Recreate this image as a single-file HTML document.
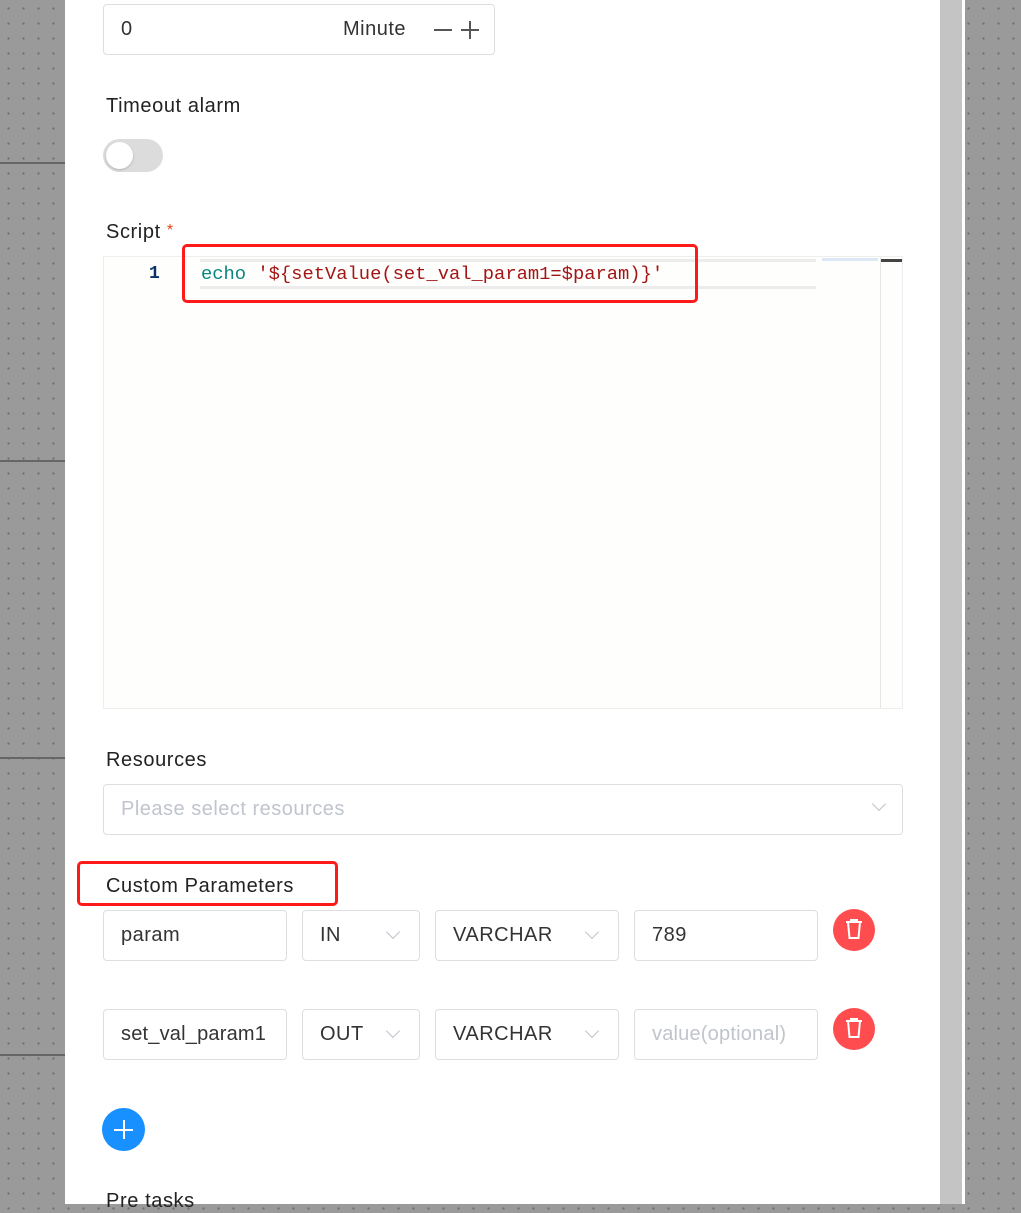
<!DOCTYPE html>
<html><head><meta charset="utf-8"><style>
*{box-sizing:border-box;margin:0;padding:0}
body{width:1021px;height:1204px;overflow:hidden;position:relative;font-family:"Liberation Sans",sans-serif;color:#333;
background-color:#9a9a9a;background-image:radial-gradient(circle at 8.5px 8.5px,#6e6e6e 1px,transparent 1.3px);background-size:15px 15px;}
.a{position:absolute}
.hl{position:absolute;left:0;width:65px;height:2px;background:#666}
.panel{position:absolute;left:65px;top:0;width:875px;height:1204px;background:#fff}
.strip{position:absolute;left:940px;top:0;width:22px;height:1204px;background:#c4c4c4}
.strip2{position:absolute;left:962px;top:0;width:3px;height:1204px;background:#fff}
.lbl{position:absolute;left:106px;font-size:20px;color:#222;line-height:24px;letter-spacing:0.6px}
.box{position:absolute;border:1px solid #dcdee2;border-radius:4px;background:#fff;font-size:20px;line-height:48px;padding-left:17px;color:#333;letter-spacing:0.5px}
.ph{color:#c0c4cc}
.chev{position:absolute;top:17px;width:10px;height:10px;border-right:1.5px solid #c0c4cc;border-bottom:1.5px solid #c0c4cc;transform:rotate(45deg)}
.del{position:absolute;width:42px;height:42px;border-radius:50%;background:#ff4d4f}
.red{position:absolute;border:3px solid #ff1a1a;border-radius:5px}
.code{position:absolute;left:97px;top:4px;font-family:"Liberation Mono",monospace;font-size:18.8px;line-height:26px;white-space:pre;color:#a31515}
</style></head><body>
<div class="hl" style="top:162px"></div>
<div class="hl" style="top:460px"></div>
<div class="hl" style="top:757px"></div>
<div class="hl" style="top:1054px"></div>
<div class="panel"></div>
<div class="strip"></div><div class="strip2"></div>

<div class="box" style="left:103px;top:4px;width:392px;height:51px">0
 <span class="a" style="left:239px;top:0">Minute</span>
 <span class="a" style="left:330px;top:24px;width:18px;height:1.5px;background:#555"></span>
 <span class="a" style="left:357px;top:24px;width:18px;height:1.5px;background:#555"></span>
 <span class="a" style="left:365px;top:16px;width:1.5px;height:18px;background:#555"></span>
</div>

<div class="lbl" style="top:94px">Timeout alarm</div>
<div class="a" style="left:103px;top:139px;width:60px;height:33px;border-radius:17px;background:#dcdcdc"></div>
<div class="a" style="left:106px;top:142px;width:27px;height:27px;border-radius:50%;background:#fff;box-shadow:0 1px 2px rgba(0,0,0,.2)"></div>

<div class="lbl" style="top:220px">Script <span style="color:#ed4014;font-size:16px;position:relative;top:-3px">*</span></div>
<div class="a" style="left:103px;top:256px;width:800px;height:453px;background:#fefefc;border:1px solid #eee">
 <div class="a" style="left:776px;top:0;width:1px;height:451px;background:#e6e6e6"></div>
 <div class="a" style="left:777px;top:2px;width:21px;height:3px;background:#444"></div>
 <div class="a" style="left:718px;top:1px;width:56px;height:3px;background:#dce8f5"></div>
 <div class="a" style="left:96px;top:2px;width:616px;height:30px;border-top:3px solid #ececec;border-bottom:3px solid #ececec"></div>
 <div class="a" style="left:45px;top:4px;font-family:'Liberation Mono',monospace;font-weight:bold;font-size:18px;color:#0a3069;line-height:26px">1</div>
 <div class="code"><span style="color:#098682">echo</span> '${setValue(set_val_param1=$param)}'</div>
</div>
<div class="red" style="left:182px;top:244px;width:516px;height:59px"></div>

<div class="lbl" style="top:748px">Resources</div>
<div class="box ph" style="left:103px;top:784px;width:800px;height:51px">Please select resources<span class="chev" style="left:770px;top:14px"></span></div>

<div class="red" style="left:77px;top:861px;width:261px;height:45px"></div>
<div class="lbl" style="top:874px">Custom Parameters</div>

<div class="box" style="left:103px;top:910px;width:184px;height:51px">param</div>
<div class="box" style="left:302px;top:910px;width:118px;height:51px">IN<span class="chev" style="left:85px;top:16px"></span></div>
<div class="box" style="left:435px;top:910px;width:184px;height:51px">VARCHAR<span class="chev" style="left:151px;top:16px"></span></div>
<div class="box" style="left:634px;top:910px;width:184px;height:51px">789</div>
<div class="del" style="left:833px;top:909px"></div>

<div class="box" style="left:103px;top:1009px;width:184px;height:51px;letter-spacing:0.2px">set_val_param1</div>
<div class="box" style="left:302px;top:1009px;width:118px;height:51px">OUT<span class="chev" style="left:85px;top:16px"></span></div>
<div class="box" style="left:435px;top:1009px;width:184px;height:51px">VARCHAR<span class="chev" style="left:151px;top:16px"></span></div>
<div class="box ph" style="left:634px;top:1009px;width:184px;height:51px;letter-spacing:0.2px">value(optional)</div>
<div class="del" style="left:833px;top:1008px"></div>

<svg class="a" style="left:833px;top:909px" width="42" height="141" viewBox="0 0 42 141" fill="none" stroke="#fff" stroke-width="2">
 <g><path d="M13 13h16M18 13v-2h6v2M15 13l1.5 16h9l1.5-16"/></g>
 <g transform="translate(0,99)"><path d="M13 13h16M18 13v-2h6v2M15 13l1.5 16h9l1.5-16"/></g>
</svg>

<div class="a" style="left:102px;top:1108px;width:43px;height:43px;border-radius:50%;background:#1890ff"></div>
<div class="a" style="left:114px;top:1128.5px;width:19px;height:2px;background:#fff"></div>
<div class="a" style="left:122.5px;top:1120px;width:2px;height:19px;background:#fff"></div>

<div class="lbl" style="top:1189px">Pre tasks</div>
</body></html>
